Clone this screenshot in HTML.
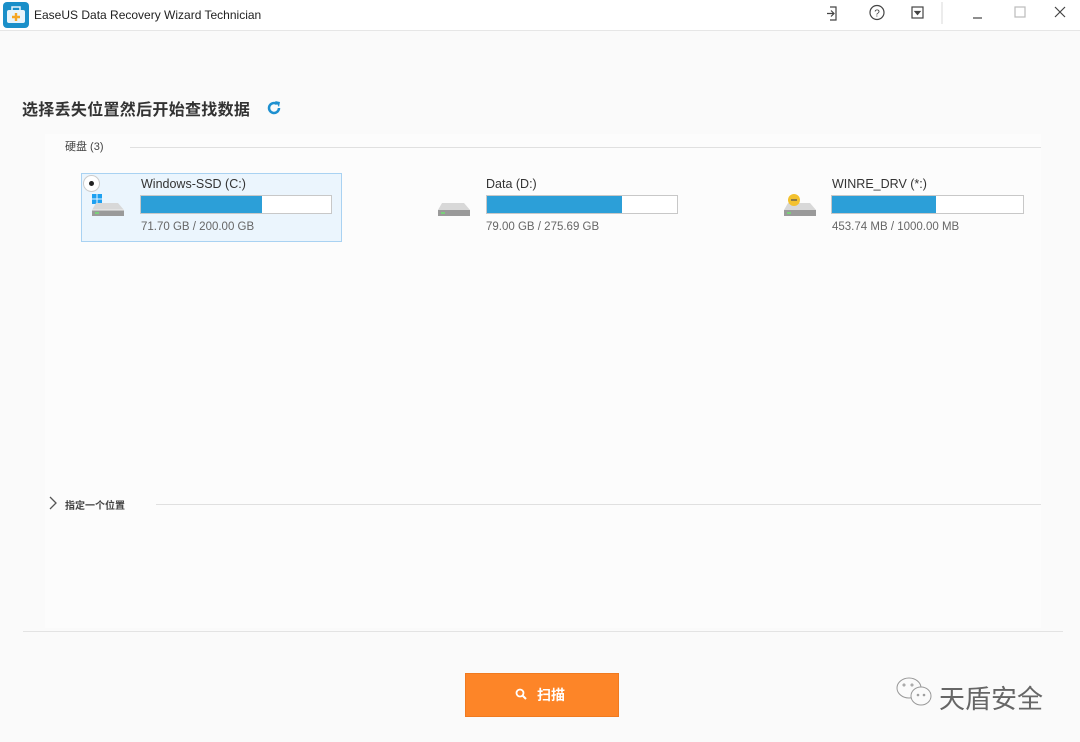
<!DOCTYPE html>
<html><head><meta charset="utf-8"><style>
*{margin:0;padding:0;box-sizing:border-box}
body{width:1080px;height:742px;background:#fafafa;position:relative;overflow:hidden;font-family:"Liberation Sans","Noto Sans CJK SC",sans-serif;color:#333}
.abs{position:absolute}
.title{left:0;top:0;width:1080px;height:31px;background:#fff;border-bottom:1px solid #e6e6e6}
.panel{left:45px;top:134px;width:996px;height:494px;background:#fcfcfc}
.bar{height:19px;border:1px solid #c8c8c8;background:#fff}
.bar i{display:block;height:100%;background:#2c9fd8}
.name{font-size:12.5px;color:#333}
.size{font-size:11.5px;color:#666}
</style></head><body>
<div class="abs title"></div>
<svg class="abs" style="left:3px;top:2px" width="26" height="26" viewBox="0 0 26 26"><rect x="0" y="0" width="26" height="26" rx="4" fill="#1a8fc9"/><rect x="4" y="8" width="18" height="13" rx="2" fill="#e8f4fb"/><rect x="9" y="5" width="8" height="4" fill="none" stroke="#e8f4fb" stroke-width="1.5"/><path d="M13 11v8M9 15h8" stroke="#f5a623" stroke-width="2.4"/></svg>
<div class="abs" style="left:34px;top:8px;font-size:12px;color:#222">EaseUS Data Recovery Wizard Technician</div>
<svg class="abs" style="left:820px;top:0" width="260" height="28" viewBox="0 0 260 28" fill="none" stroke="#444" stroke-width="1.2">
<path d="M10 7h6v13h-6M7 13.5h7M11 10.5l3 3-3 3"/>
<circle cx="57" cy="12.5" r="7"/><text x="57" y="16.5" font-size="10" text-anchor="middle" fill="#444" stroke="none" font-family="Liberation Sans">?</text>
<rect x="92" y="7" width="11" height="11"/><path d="M95 11.5h5l-2.5 3z" fill="#444"/>
<path d="M122 2v22" stroke="#e0e0e0"/>
<path d="M153 18h9"/><rect x="195" y="7" width="10" height="10" stroke="#bbb"/>
<path d="M235 7l10 10M245 7l-10 10"/>
</svg>
<div class="abs" style="left:22px;top:96px;font-size:16px;font-weight:bold;color:#333;letter-spacing:0.3px">选择丢失位置然后开始查找数据</div>
<svg class="abs" style="left:265px;top:99px" width="18" height="18" viewBox="0 0 18 18"><path d="M14 9a5 5 0 1 1-2-4" fill="none" stroke="#1e90d0" stroke-width="2.5"/><path d="M10 2l5 1-1 5z" fill="#1e90d0"/></svg>
<div class="abs panel"></div>
<div class="abs" style="left:65px;top:138px;font-size:11px;color:#444">硬盘 (3)</div>
<div class="abs" style="left:130px;top:147px;width:911px;height:1px;background:#e0e0e0"></div>
<div class="abs" style="left:81px;top:173px;width:261px;height:69px;background:#ebf5fd;border:1px solid #a9d2f2"></div>
<div class="abs" style="left:83px;top:175px;width:17px;height:17px;border-radius:50%;background:#fff;border:1px solid #ccc"></div>
<div class="abs" style="left:89px;top:181px;width:5px;height:5px;border-radius:50%;background:#222"></div>
<svg class="abs" style="left:92px;top:194px" width="10" height="10"><rect x="0" y="0" width="4.5" height="4.5" fill="#1ea1f1"/><rect x="5.5" y="0" width="4.5" height="4.5" fill="#1ea1f1"/><rect x="0" y="5.5" width="4.5" height="4.5" fill="#1ea1f1"/><rect x="5.5" y="5.5" width="4.5" height="4.5" fill="#1ea1f1"/></svg>
<svg class="abs" style="left:91px;top:202px" width="34" height="16"><path d="M5 1h22l6 7v6H1V8z" fill="#d8d8d8"/><path d="M1 8h32v6H1z" fill="#9a9a9a"/><path d="M1 8h32" stroke="#eee"/><rect x="4" y="10" width="4" height="2" fill="#7ad07a"/></svg>
<svg class="abs" style="left:437px;top:202px" width="34" height="16"><path d="M5 1h22l6 7v6H1V8z" fill="#d8d8d8"/><path d="M1 8h32v6H1z" fill="#9a9a9a"/><rect x="4" y="10" width="4" height="2" fill="#7ad07a"/></svg>
<svg class="abs" style="left:783px;top:202px" width="34" height="16"><path d="M5 1h22l6 7v6H1V8z" fill="#d8d8d8"/><path d="M1 8h32v6H1z" fill="#9a9a9a"/><rect x="4" y="10" width="4" height="2" fill="#7ad07a"/></svg>
<svg class="abs" style="left:787px;top:193px" width="14" height="14"><circle cx="7" cy="7" r="6" fill="#f3c12e"/><path d="M4 7h6" stroke="#555" stroke-width="1.3"/></svg>
<div class="abs name" style="left:141px;top:177px">Windows-SSD (C:)</div>
<div class="abs bar" style="left:140px;top:195px;width:192px"><i style="width:121px"></i></div>
<div class="abs size" style="left:141px;top:221px">71.70 GB / 200.00 GB</div>
<div class="abs name" style="left:486px;top:177px">Data (D:)</div>
<div class="abs bar" style="left:486px;top:195px;width:192px"><i style="width:135px"></i></div>
<div class="abs size" style="left:486px;top:221px">79.00 GB / 275.69 GB</div>
<div class="abs name" style="left:832px;top:177px">WINRE_DRV (*:)</div>
<div class="abs bar" style="left:831px;top:195px;width:193px"><i style="width:104px"></i></div>
<div class="abs size" style="left:832px;top:221px">453.74 MB / 1000.00 MB</div>
<svg class="abs" style="left:48px;top:496px" width="10" height="14"><path d="M2 1l6 6-6 6" fill="none" stroke="#555" stroke-width="1.3"/></svg>
<div class="abs" style="left:65px;top:497px;font-size:10px;font-weight:bold;color:#444">指定一个位置</div>
<div class="abs" style="left:156px;top:504px;width:885px;height:1px;background:#e0e0e0"></div>
<div class="abs" style="left:23px;top:631px;width:1040px;height:1px;background:#e3e3e3"></div>
<div class="abs" style="left:465px;top:673px;width:154px;height:44px;background:#fd8528;border:1px solid #f07a20"></div>
<svg class="abs" style="left:515px;top:688px" width="12" height="12"><circle cx="5" cy="5" r="3.5" fill="none" stroke="#fff" stroke-width="1.8"/><path d="M7.5 7.5l3.5 3.5" stroke="#fff" stroke-width="2"/></svg>
<div class="abs" style="left:537px;top:685px;font-size:14px;font-weight:bold;color:#fff">扫描</div>
<svg class="abs" style="left:895px;top:676px" width="40" height="34" fill="none" stroke="#999" stroke-width="1"><ellipse cx="14" cy="12" rx="12" ry="10"/><ellipse cx="26" cy="20" rx="10" ry="9" fill="#fafafa"/><circle cx="9" cy="9" r="1"/><circle cx="17" cy="9" r="1"/><circle cx="23" cy="19" r="0.8"/><circle cx="29" cy="19" r="0.8"/></svg>
<div class="abs" style="left:939px;top:679px;font-size:26px;color:#666">天盾安全</div>
</body></html>
